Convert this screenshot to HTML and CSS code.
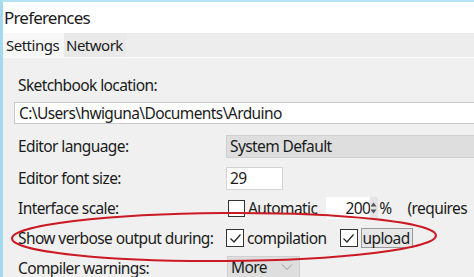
FILE: index.html
```html
<!DOCTYPE html>
<html>
  <head>
    <link rel="stylesheet" href="styles.css">
  </head>
  <body>
    <div class="window">
      <div class="titlebar">Preferences</div>
      <div class="tabs">
        <div class="tab active">Settings</div>
        <div class="tab">Network</div>
      </div>
      <div class="panel">
        <div class="row top">
          <span class="label">Sketchbook location:</span>
        </div>
        <div class="path">C:\Users\hwiguna\Documents\Arduino</div>
        <div class="row lang-row">
          <span class="label">Editor language:</span>
          <div class="select lang">System Default</div>
        </div>
        <div class="row">
          <span class="label">Editor font size:</span>
          <div class="field size">29</div>
        </div>
        <div class="row">
          <span class="label">Interface scale:</span>
          <span class="check"></span>
          <span class="opt">Automatic</span>
          <div class="spin">
            <span class="num">200</span>
            <span class="arrows">
              <svg width="7" height="14" viewBox="0 0 7 14">
                <path d="M0.5 5.5 L3.5 1.5 L6.5 5.5 Z" fill="#555" />
                <path d="M0.5 8.5 L3.5 12.5 L6.5 8.5 Z" fill="#555" />
              </svg>
            </span>
          </div>
          <span class="pct">%</span>
          <span class="note">(requires</span>
        </div>
        <div class="row">
          <span class="label">Show verbose output during:</span>
          <span class="check on first">
            <svg width="15" height="15" viewBox="0 0 15 15">
              <path d="M2.5 7.5 L6 11 L12.5 3.5" fill="none" stroke="#222" stroke-width="1.2" />
            </svg>
          </span>
          <span class="opt">compilation</span>
          <span class="check on second">
            <svg width="15" height="15" viewBox="0 0 15 15">
              <path d="M2.5 7.5 L6 11 L12.5 3.5" fill="none" stroke="#222" stroke-width="1.2" />
            </svg>
          </span>
          <span class="opt focus">upload</span>
        </div>
        <div class="row">
          <span class="label">Compiler warnings:</span>
          <div class="select warn">
            More
            <svg width="12" height="8" viewBox="0 0 12 8">
              <path d="M1 1.5 L6 6.5 L11 1.5" fill="none" stroke="#999" stroke-width="1" />
            </svg>
          </div>
        </div>
      </div>
      <svg class="ring" width="432" height="56" viewBox="0 0 432 56">
        <ellipse cx="216" cy="27" rx="212" ry="24" fill="none" stroke="#cc1a24" stroke-width="2" transform="rotate(-0.4 216 27)" />
      </svg>
    </div>
  </body>
</html>
```

FILE: styles.css
```css
body {
  margin: 0;
  font-family: "Noto Sans", "Open Sans", sans-serif;
  color: #1b1b1b;
  overflow: hidden;
}

.window {
  position: relative;
  width: 474px;
  height: 277px;
  border-top: 2px solid #b3e2f1;
  border-left: 3px solid #a6d8ee;
  box-sizing: border-box;
  background: #f0f0f0;
  overflow: hidden;
}

.titlebar {
  height: 31px;
  background: #ffffff;
  font-size: 17px;
  letter-spacing: -0.8px;
  line-height: 31px;
  padding-left: 1px;
}

.tabs {
  display: flex;
  height: 24px;
  background: #ededed;
  border-bottom: 1px solid #fafafa;
  font-size: 15px;
  letter-spacing: -0.5px;
}

.tab {
  line-height: 24px;
  padding: 0 2px;
}

.tab.active {
  background: #f8f8f8;
  width: 56px;
  padding-left: 3px;
}

.tab:not(.active) {
  background: #e9e9e9;
  padding-right: 3px;
}

.panel {
  font-size: 15.5px;
  letter-spacing: -0.6px;
}

.row {
  display: flex;
  align-items: center;
  height: 30px;
  padding-left: 15px;
  white-space: nowrap;
}

.row.top {
  margin-top: 12px;
}

.lang-row {
  margin-bottom: 2px;
}

.label {
  width: 208px;
  flex: none;
}

.path {
  margin: 2px 0 7px 11px;
  height: 22px;
  line-height: 20px;
  background: #ffffff;
  border: 1px solid #c9c9c9;
  border-right: none;
  padding-left: 4px;
  white-space: nowrap;
  box-sizing: border-box;
}

.select {
  display: flex;
  align-items: center;
  justify-content: space-between;
  background: #dedede;
  border: 1px solid #cfcfcf;
  padding-left: 3px;
  box-sizing: border-box;
}

.lang {
  flex: 1;
  border-right: none;
  height: 23px;
}

.field {
  background: #ffffff;
  border: 1px solid #d4d4d4;
  height: 23px;
  line-height: 21px;
  box-sizing: border-box;
  padding-left: 3px;
}

.size {
  width: 57px;
}

.check {
  width: 17px;
  height: 17px;
  box-sizing: border-box;
  border: 1px solid #333333;
  background: #ffffff;
  margin-left: 2px;
  display: flex;
  align-items: center;
  justify-content: center;
  flex: none;
}

.check.first {
  margin-left: 0;
  width: 18px;
  height: 18px;
}

.check.second {
  margin-left: 13px;
  width: 18px;
  height: 18px;
}

.opt {
  margin-left: 3px;
}

.spin {
  display: flex;
  align-items: center;
  margin-left: 9px;
  height: 22px;
  background: #ffffff;
}

.num {
  width: 44px;
  text-align: right;
}

.arrows {
  width: 8px;
  height: 22px;
  display: flex;
  align-items: center;
  background: #e4e4e4;
}

.pct {
  margin-left: 1px;
}

.note {
  margin-left: 16px;
}

.focus {
  background: #e6e6e6;
  border: 1px solid #9a9a9a;
  padding: 0 2px 0 1px;
  line-height: 18px;
}

.warn {
  width: 73px;
  margin-left: 1px;
  height: 22px;
  padding-right: 6px;
  align-self: flex-start;
  margin-top: 3px;
}

.ring {
  position: absolute;
  left: 5px;
  top: 208px;
}
```
